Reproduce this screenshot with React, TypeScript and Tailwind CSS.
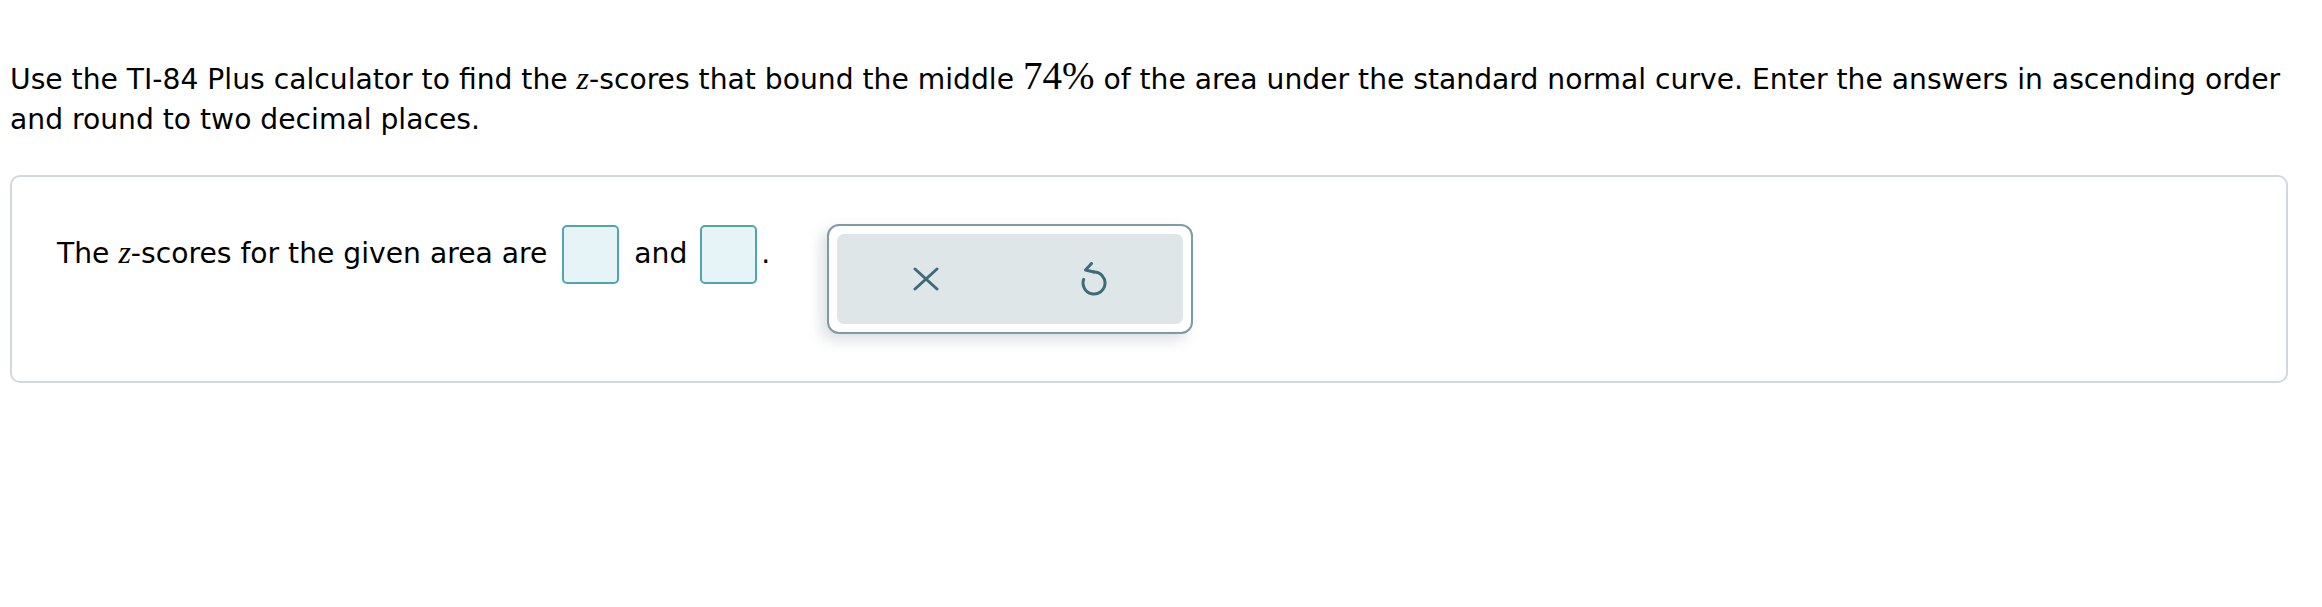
const Z = () => (
  <span className="italic font-['Liberation_Serif',serif] text-[32px] leading-none">z</span>
);

const AnswerBox = () => (
  <span className="inline-block w-[57px] h-[59px] rounded-[5px] border-2 border-[#4fa6b3] bg-[#e6f4f7] align-middle" />
);

const Palette = () => (
  <div className="ml-[57px] w-[366px] h-[110px] shrink-0 rounded-[12px] border-2 border-[#7c9ca5] bg-white p-[8px] shadow-[-6px_6px_14px_rgba(60,80,90,0.18)]">
    <div className="flex h-full items-center rounded-[7px] bg-[#dfe6e8]">
      <button className="flex flex-1 items-center justify-center pl-[4px]">
        <svg width="26" height="24" viewBox="0 0 26 24" fill="none" stroke="#3d6b78" strokeWidth="3" strokeLinecap="round">
          <path d="M2 2 L24 22 M24 2 L2 22" />
        </svg>
      </button>
      <button className="flex flex-1 items-center justify-center pr-[4px]">
        <svg width="28" height="34" viewBox="0 0 28 34" fill="none" stroke="#3d6b78" strokeWidth="3" strokeLinecap="round" strokeLinejoin="round">
          <path d="M10.5 1.5 L4.5 8 L13 10" />
          <path d="M13 10 A 11 11 0 1 1 2.6 17.5" />
        </svg>
      </button>
    </div>
  </div>
);

export default function App() {
  return (
    <div className="min-h-[607px] bg-white pl-[10px] pr-[24px] pt-[56px] font-['DejaVu_Sans','Verdana',sans-serif] text-[28.2px] leading-[40px] text-black">
      <p>
        Use the TI-84 Plus calculator to find the <Z />-scores that bound the middle{" "}
        <span className="font-['Liberation_Serif',serif] text-[39px] leading-none">74%</span> of the area under the
        standard normal curve. Enter the answers in ascending order and round to two decimal places.
      </p>

      <div className="mr-[10px] mt-[35px] flex items-start rounded-[10px] border-2 border-[#d0dadd] py-[47px] pl-[45px] pr-[20px]">
        <div className="flex h-[60px] items-center whitespace-nowrap">
          <span>
            The <Z />-scores for the given area are
          </span>
          <span className="ml-[15px]">
            <AnswerBox />
          </span>
          <span className="ml-[15px]">and</span>
          <span className="ml-[13px]">
            <AnswerBox />
          </span>
          <span className="ml-[4px]">.</span>
        </div>
        <Palette />
      </div>
    </div>
  );
}
